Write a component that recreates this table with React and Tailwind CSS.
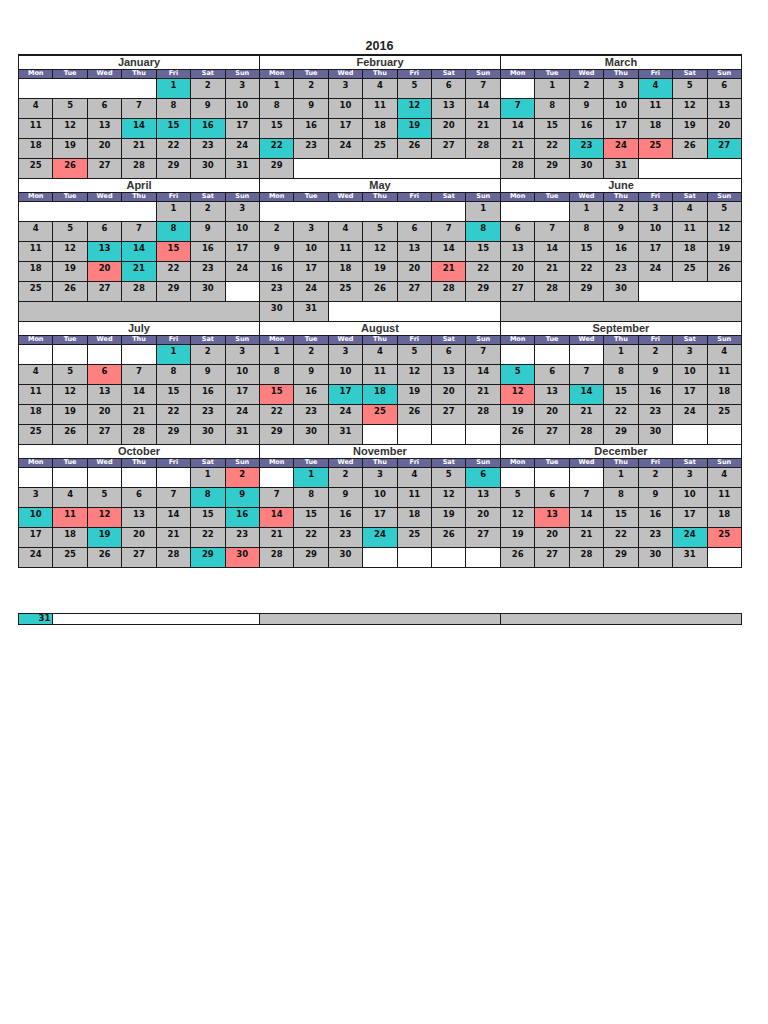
const MONTHS = [
  { name: 'January', start: 4, days: 31, teal: [1, 14, 15, 16], red: [26] },
  { name: 'February', start: 0, days: 29, teal: [12, 19, 22], red: [] },
  { name: 'March', start: 1, days: 31, teal: [4, 7, 23, 27], red: [24, 25] },
  { name: 'April', start: 4, days: 30, teal: [8, 13, 14, 21], red: [15, 20] },
  { name: 'May', start: 6, days: 31, teal: [8], red: [21] },
  { name: 'June', start: 2, days: 30, teal: [], red: [] },
  { name: 'July', start: 4, days: 31, teal: [1], red: [6] },
  { name: 'August', start: 0, days: 31, teal: [17, 18], red: [15, 25] },
  { name: 'September', start: 3, days: 30, teal: [5, 14], red: [12] },
  { name: 'October', start: 5, days: 31, teal: [8, 9, 10, 16, 19, 29, 31], red: [2, 11, 12, 30] },
  { name: 'November', start: 1, days: 30, teal: [1, 6, 24], red: [14] },
  { name: 'December', start: 3, days: 31, teal: [24], red: [13, 25] },
];

const DAYS = ['Mon', 'Tue', 'Wed', 'Thu', 'Fri', 'Sat', 'Sun'];
const B = 'border border-[#1a1a1a]';
const NUM = "font-['DejaVu_Sans',sans-serif] font-bold text-[8.5px] leading-none text-[#111]";

function bgFor(m, n) {
  if (m.teal.includes(n)) return 'bg-[#33cccc]';
  if (m.red.includes(n)) return 'bg-[#ff8080]';
  return 'bg-[#c0c0c0]';
}

// cells of one month for week row r
function weekCells(m, r, merge, keyBase) {
  const nums = DAYS.map((_, d) => r * 7 + d - m.start + 1);
  const inMonth = nums.map((n) => n >= 1 && n <= m.days);
  if (!inMonth.some(Boolean)) {
    return [<td key={keyBase} colSpan={7} className={`${B} bg-[#c0c0c0]`} />];
  }
  const out = [];
  let d = 0;
  while (d < 7) {
    if (inMonth[d]) {
      out.push(
        <td key={keyBase + '-' + d} className={`${B} ${bgFor(m, nums[d])} ${NUM} text-center align-top pt-[2px]`}>
          {nums[d]}
        </td>
      );
      d++;
    } else if (merge) {
      let span = 0;
      while (d + span < 7 && !inMonth[d + span]) span++;
      out.push(<td key={keyBase + '-' + d} colSpan={span} className={`${B} bg-white`} />);
      d += span;
    } else {
      out.push(<td key={keyBase + '-' + d} className={`${B} bg-white`} />);
      d++;
    }
  }
  return out;
}

function Quarter({ q }) {
  const ms = MONTHS.slice(q * 3, q * 3 + 3);
  const rows = q === 1 ? 6 : 5;
  const merge = q < 2;
  return (
    <>
      <tr className="h-[14px]">
        {ms.map((m) => (
          <td
            key={m.name}
            colSpan={7}
            className={`${B} ${q === 0 ? 'border-t-2' : ''} bg-white text-center align-middle p-0 font-['Liberation_Sans',Arial,sans-serif] font-bold text-[11px] leading-none text-[#333]`}
          >
            {m.name}
          </td>
        ))}
      </tr>
      <tr className="h-[9px]">
        {ms.map((m) =>
          DAYS.map((d) => (
            <td
              key={m.name + d}
              className={`${B} bg-[#666699] text-center align-middle p-0 font-['DejaVu_Sans',sans-serif] font-bold text-[6.5px] leading-none text-white`}
            >
              {d}
            </td>
          ))
        )}
      </tr>
      {Array.from({ length: rows }).map((_, r) => (
        <tr key={r} className="h-[20px]">
          {ms.map((m) => weekCells(m, r, merge, m.name + r))}
        </tr>
      ))}
    </>
  );
}

function Cols() {
  return (
    <colgroup>
      {Array.from({ length: 21 }).map((_, i) => (
        <col key={i} className="w-[34.43px]" />
      ))}
    </colgroup>
  );
}

export default function App() {
  return (
    <div className="w-[768px] h-[1024px] bg-white pt-[37px] pl-[18px]">
      <div className="w-[723px] h-[17px] text-center font-['Liberation_Sans',Arial,sans-serif] font-bold text-[12.5px] leading-[18px] text-[#222]">
        2016
      </div>
      <table className="w-[723px] table-fixed border-collapse">
        <Cols />
        <tbody>
          {[0, 1, 2, 3].map((q) => (
            <Quarter key={q} q={q} />
          ))}
        </tbody>
      </table>
      <table className="w-[723px] table-fixed border-collapse mt-[45px]">
        <Cols />
        <tbody>
          <tr className="h-[11px]">
            <td className={`${B} bg-[#33cccc] ${NUM} text-right align-middle pr-[2px]`}>31</td>
            <td colSpan={6} className={`${B} bg-white`} />
            <td colSpan={7} className={`${B} bg-[#c0c0c0]`} />
            <td colSpan={7} className={`${B} bg-[#c0c0c0]`} />
          </tr>
        </tbody>
      </table>
    </div>
  );
}
